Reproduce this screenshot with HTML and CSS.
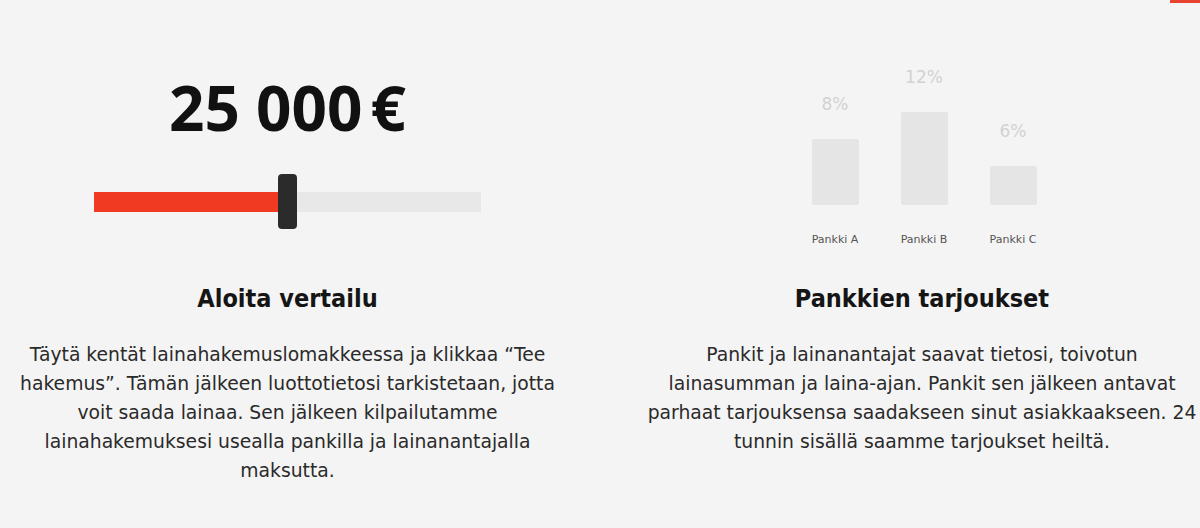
FILE: index.html
```html
<!DOCTYPE html>
<html lang="fi">
<head>
<meta charset="utf-8">
<title>Lainavertailu</title>
<link rel="stylesheet" href="styles.css">
</head>
<body>
<div class="topbar"><span class="topbar-accent"></span></div>
<main class="steps">
  <section class="step">
    <div class="visual visual-amount">
      <div class="amount">25 000&#8239;€</div>
      <div class="slider">
        <div class="slider-fill" style="width: 48%"></div>
        <div class="slider-thumb"></div>
      </div>
    </div>
    <h2 class="step-title">Aloita vertailu</h2>
    <p class="step-text">Täytä kentät lainahakemuslomakkeessa ja klikkaa “Tee<br>hakemus”. Tämän jälkeen luottotietosi tarkistetaan, jotta<br>voit saada lainaa. Sen jälkeen kilpailutamme<br>lainahakemuksesi usealla pankilla ja lainanantajalla<br>maksutta.</p>
  </section>
  <section class="step">
    <div class="visual visual-chart">
      <div class="chart">
        <div class="chart-item">
          <span class="chart-pct">8%</span>
          <span class="chart-bar" style="height: 66px"></span>
          <span class="chart-label">Pankki A</span>
        </div>
        <div class="chart-item">
          <span class="chart-pct">12%</span>
          <span class="chart-bar" style="height: 93px"></span>
          <span class="chart-label">Pankki B</span>
        </div>
        <div class="chart-item">
          <span class="chart-pct">6%</span>
          <span class="chart-bar" style="height: 39px"></span>
          <span class="chart-label">Pankki C</span>
        </div>
      </div>
    </div>
    <h2 class="step-title">Pankkien tarjoukset</h2>
    <p class="step-text">Pankit ja lainanantajat saavat tietosi, toivotun<br>lainasumman ja laina-ajan. Pankit sen jälkeen antavat<br>parhaat tarjouksensa saadakseen sinut asiakkaakseen. 24<br>tunnin sisällä saamme tarjoukset heiltä.</p>
  </section>
</main>
</body>
</html>
```

FILE: styles.css
```css
* { box-sizing: border-box; }
html, body {
  margin: 0;
  padding: 0;
  background: #f4f4f4;
}
body {
  width: 1200px;
  height: 528px;
  overflow: hidden;
  font-family: "DejaVu Sans", "Liberation Sans", sans-serif;
  color: #222;
}
.topbar {
  display: flex;
  justify-content: flex-end;
  height: 3px;
}
.topbar-accent {
  width: 30px;
  height: 3px;
  background: #e8432f;
}
.steps {
  display: grid;
  grid-template-columns: 575px 560px;
  column-gap: 67px;
}
.step {
  display: flex;
  flex-direction: column;
  align-items: center;
  text-align: center;
}
.visual {
  height: 281px;
  display: flex;
  flex-direction: column;
  align-items: center;
}
.amount {
  font-family: "Open Sans", sans-serif;
  font-weight: 700;
  font-size: 62px;
  line-height: 62px;
  letter-spacing: -0.5px;
  color: #111;
  margin-top: 73px;
}
.slider {
  position: relative;
  width: 387px;
  height: 20px;
  margin-top: 54px;
  background: #e8e8e8;
}
.slider-fill {
  height: 100%;
  background: #f03a22;
}
.slider-thumb {
  position: absolute;
  left: 184px;
  top: -18px;
  width: 19px;
  height: 55px;
  border-radius: 4px;
  background: #2b2b2b;
}
.chart {
  display: flex;
  align-items: flex-end;
  margin-top: 64px;
  margin-left: 4px;
}
.chart-item {
  width: 89px;
  display: flex;
  flex-direction: column;
  align-items: center;
}
.chart-pct {
  font-size: 17px;
  line-height: 20px;
  color: #d2d2d2;
  margin-bottom: 25px;
}
.chart-bar {
  display: block;
  width: 47px;
  background: #e5e5e5;
  border-radius: 2px;
}
.chart-label {
  font-size: 11px;
  line-height: 14px;
  color: #555;
  margin-top: 28px;
}
.step-title {
  margin: 0;
  font-family: "DejaVu Sans Condensed", "DejaVu Sans", sans-serif;
  font-stretch: condensed;
  font-size: 25px;
  line-height: 30px;
  font-weight: 700;
  color: #151515;
}
.step-text {
  margin: 26px 0 0;
  white-space: nowrap;
  font-size: 18.75px;
  line-height: 29px;
  color: #2a2a2a;
}
```
